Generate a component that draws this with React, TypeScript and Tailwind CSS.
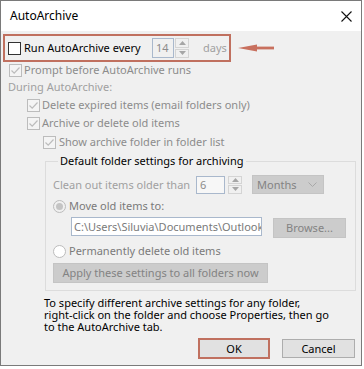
import React from 'react';

const Check = ({ checked, disabled }: { checked?: boolean; disabled?: boolean }) => (
  <span
    className={`w-[13px] h-[13px] shrink-0 border flex items-center justify-center ${
      disabled ? 'border-[#bcbcbc] bg-[#f4f4f4]' : 'border-[#333333] bg-white'
    }`}
  >
    {checked && (
      <svg width="11" height="11" viewBox="0 0 11 11">
        <path d="M1.5 5.5 L4.2 8.2 L9.5 2.5" fill="none" stroke="#bcbcbc" strokeWidth="1.2" />
      </svg>
    )}
  </span>
);

const Radio = ({ selected }: { selected?: boolean }) => (
  <span
    className={`w-[13px] h-[13px] shrink-0 rounded-full border border-[#bcbcbc] flex items-center justify-center ${
      selected ? 'bg-[#f0f0f0]' : 'bg-white'
    }`}
  >
    {selected && <span className="w-[7px] h-[7px] rounded-full bg-[#c4c4c4]" />}
  </span>
);

const Spinner = ({ h }: { h: string }) => (
  <div className={`w-[14px] ${h} flex flex-col gap-[1px]`}>
    <div className="flex-1 border border-[#d4d4d4] bg-[#f0f0f0] flex items-center justify-center">
      <svg width="7" height="4" viewBox="0 0 7 4">
        <polygon points="0,4 3.5,0 7,4" fill="#a6a6a6" />
      </svg>
    </div>
    <div className="flex-1 border border-[#d4d4d4] bg-[#f0f0f0] flex items-center justify-center">
      <svg width="7" height="4" viewBox="0 0 7 4">
        <polygon points="0,0 3.5,4 7,0" fill="#a6a6a6" />
      </svg>
    </div>
  </div>
);

const App: React.FC = () => {
  return (
    <div className="w-[364px] h-[369px] bg-white font-['Noto_Sans',sans-serif] text-[11px] leading-[14px] text-black">
      <div className="w-[362px] h-[366px] border border-[#7a7a7a] flex flex-col">
        {/* Title bar */}
        <div className="h-[30px] shrink-0 bg-white flex items-center justify-between pl-[9px] pr-[9px]">
          <span className="text-[12px]">AutoArchive</span>
          <svg width="11" height="11" viewBox="0 0 11 11">
            <path d="M0.5 0.5 L10.5 10.5 M10.5 0.5 L0.5 10.5" stroke="#111" strokeWidth="1.1" />
          </svg>
        </div>

        {/* Body */}
        <div className="flex-1 bg-[#f0f0f0] flex flex-col">
          <div className="flex items-center mt-[3px] ml-[2px]">
            <div className="w-[228px] h-[28px] border-2 border-[#c0705f] flex items-center pl-[3px]">
              <Check />
              <span className="ml-[3px] w-[128px] whitespace-nowrap">Run AutoArchive every</span>
              <div className="w-[22px] h-[20px] border border-[#a9b8cc] bg-[#f0f0f0] text-[#8c8c8c] pl-[3px] flex items-center">
                14
              </div>
              <div className="ml-[1px]">
                <Spinner h="h-[20px]" />
              </div>
              <span className="ml-[14px] text-[#a0a0a0]">days</span>
            </div>
            <svg className="ml-[7px]" width="36" height="10" viewBox="0 0 36 10">
              <polygon points="0,5 19,1.5 19,8.5" fill="#c8705e" />
              <rect x="17" y="3.6" width="19" height="2.8" fill="#c8705e" />
            </svg>
          </div>

          <div className="h-[16px] flex items-center pl-[8px] text-[#8c8c8c]">
            <Check checked disabled />
            <span className="ml-[2px] whitespace-nowrap">Prompt before AutoArchive runs</span>
          </div>
          <div className="h-[18px] flex items-center pl-[7px] text-[#a0a0a0]">During AutoArchive:</div>
          <div className="h-[18px] flex items-center pl-[26px] text-[#8c8c8c]">
            <Check checked disabled />
            <span className="ml-[2px] whitespace-nowrap">Delete expired items (email folders only)</span>
          </div>
          <div className="h-[18px] flex items-center pl-[26px] text-[#8c8c8c]">
            <Check checked disabled />
            <span className="ml-[2px] whitespace-nowrap">Archive or delete old items</span>
          </div>
          <div className="h-[20px] flex items-center pl-[42px] text-[#8c8c8c]">
            <Check checked disabled />
            <span className="ml-[3px] whitespace-nowrap">Show archive folder in folder list</span>
          </div>

          {/* Group box */}
          <fieldset className="ml-[44px] w-[311px] border border-[#dcdcdc] pl-[7px] pb-[7px]">
            <legend className="ml-[5px] px-[2px] leading-[18px] text-black">Default folder settings for archiving</legend>
            <div className="mt-[5px] h-[19px] flex items-center text-[#a0a0a0]">
              <span className="w-[143px] whitespace-nowrap">Clean out items older than</span>
              <div className="w-[29px] h-[18px] border border-[#a9b8cc] bg-[#f7f7f7] text-[#8c8c8c] pl-[3px] flex items-center">
                6
              </div>
              <div className="ml-[3px]">
                <Spinner h="h-[18px]" />
              </div>
              <div className="ml-[10px] w-[72px] h-[19px] bg-[#cccccc] border border-[#c4c4c4] text-[#838383] flex items-center justify-between pl-[4px] pr-[6px]">
                <span>Months</span>
                <svg width="9" height="5" viewBox="0 0 9 5">
                  <path d="M0.5 0.5 L4.5 4.5 L8.5 0.5" fill="none" stroke="#a8a8a8" strokeWidth="1" />
                </svg>
              </div>
            </div>
            <div className="mt-[3px] h-[18px] flex items-center text-[#7a7a7a]">
              <Radio selected />
              <span className="ml-[3px]">Move old items to:</span>
            </div>
            <div className="mt-[2px] flex items-start">
              <div className="ml-[18px] w-[191px] h-[19px] border border-[#a9b8cc] bg-white text-[#7a7a7a] pl-[2px] flex items-center overflow-hidden whitespace-nowrap">
                C:\Users\Siluvia\Documents\Outlook
              </div>
              <div className="ml-[11px] mt-[1px] w-[73px] h-[20px] bg-[#cccccc] border border-[#c4c4c4] text-[#838383] flex items-center justify-center">
                Browse...
              </div>
            </div>
            <div className="mt-[4px] h-[18px] flex items-center text-[#7a7a7a]">
              <Radio />
              <span className="ml-[3px]">Permanently delete old items</span>
            </div>
            <div className="mt-[3px] w-[215px] h-[20px] bg-[#cccccc] border border-[#c4c4c4] text-[#838383] flex items-center justify-center whitespace-nowrap">
              Apply these settings to all folders now
            </div>
          </fieldset>

          <div className="mt-[6px] ml-[43px] flex flex-col whitespace-nowrap">
            <span className="h-[12px] leading-[12px]">To specify different archive settings for any folder,</span>
            <span className="h-[12px] leading-[12px]">right-click on the folder and choose Properties, then go</span>
            <span className="h-[12px] leading-[12px]">to the AutoArchive tab.</span>
          </div>

          <div className="mt-auto mb-[6px] pr-[6px] h-[21px] flex items-center justify-end gap-[12px]">
            <div className="w-[72px] h-[21px] border-2 border-[#c0705f] bg-[#e1e1e1] flex items-center justify-center">
              OK
            </div>
            <div className="w-[73px] h-[19px] border border-[#adadad] bg-[#e1e1e1] flex items-center justify-center">
              Cancel
            </div>
          </div>
        </div>
      </div>
    </div>
  );
};

export default App;
